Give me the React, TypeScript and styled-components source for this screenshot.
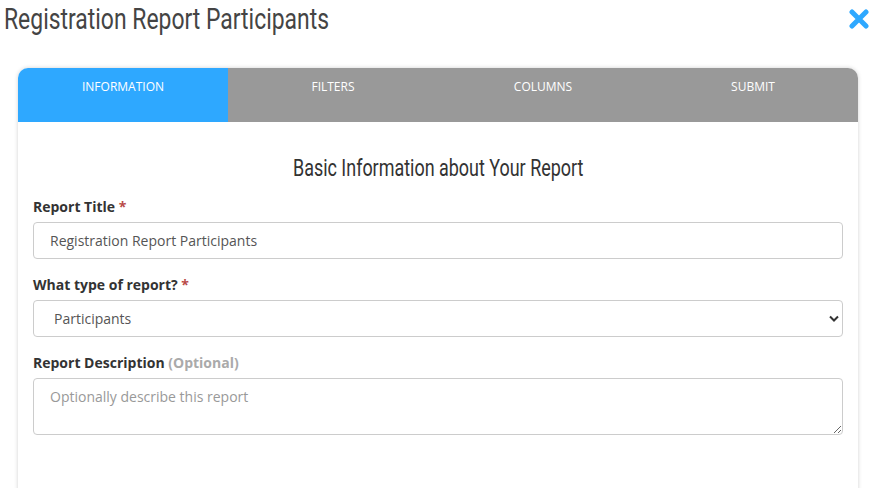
import styled, { createGlobalStyle } from "styled-components";

const GlobalStyle = createGlobalStyle`
  html, body {
    margin: 0;
    padding: 0;
    background: #fff;
    font-family: "Open Sans", "Liberation Sans", sans-serif;
    overflow: hidden;
  }
`;

// no condensed face installed, so squeeze Roboto a bit to look like Oswald
const condensed = `"Roboto", "Liberation Sans", sans-serif`;

const Page = styled.div`
  width: 874px;
  height: 488px;
  overflow: hidden;
`;

const Header = styled.div`
  display: flex;
  align-items: center;
  justify-content: space-between;
  padding: 0 3px 0 4px;
  height: 38px;
`;

const Title = styled.h1`
  margin: 0;
  display: inline-block;
  font-family: ${condensed};
  font-weight: 400;
  font-size: 29px;
  color: #444;
  transform: scaleX(0.79);
  transform-origin: left center;
  white-space: nowrap;
`;

const CloseButton = styled.button`
  border: none;
  background: none;
  padding: 0;
  width: 24px;
  height: 24px;
  cursor: pointer;
  display: flex;
  align-items: center;
  justify-content: center;
`;

const Card = styled.div`
  margin: 30px 16px 0 18px;
  border-radius: 10px 10px 0 0;
  box-shadow: 0 0 4px rgba(0, 0, 0, 0.18);
  background: #fff;
  height: 500px;
  overflow: hidden;
`;

const Tabs = styled.div`
  display: grid;
  grid-template-columns: repeat(4, 1fr);
  height: 54px;
`;

const Tab = styled.div<{ $active?: boolean }>`
  background: ${(p) => (p.$active ? "#2ea8ff" : "#999999")};
  color: #fff;
  font-size: 12px;
  text-transform: uppercase;
  text-align: center;
  padding-top: 10px;
  box-sizing: border-box;
`;

const Body = styled.div`
  padding: 33px 15px 0 15px;
`;

const HeadingRow = styled.div`
  text-align: center;
  margin-bottom: 15px;
`;

const SectionHeading = styled.h2`
  margin: 0;
  display: inline-block;
  font-family: ${condensed};
  font-weight: 400;
  font-size: 23px;
  color: #333;
  transform: scaleX(0.78);
  white-space: nowrap;
`;

const Field = styled.div`
  margin-bottom: 16px;
`;

const Label = styled.label`
  display: block;
  font-size: 14px;
  font-weight: 700;
  color: #333;
  margin-bottom: 6px;
`;

const Required = styled.span`
  color: #b94a48;
`;

const Optional = styled.span`
  color: #aaa;
`;

const inputBase = `
  width: 100%;
  box-sizing: border-box;
  border: 1px solid #ccc;
  border-radius: 4px;
  font-family: "Open Sans", "Liberation Sans", sans-serif;
  font-size: 14px;
  color: #555;
  background: #fff;
  outline: none;
`;

const TextInput = styled.input`
  ${inputBase}
  height: 37px;
  padding: 0 16px;
`;

const SelectWrap = styled.div`
  position: relative;
`;

const Select = styled.select`
  ${inputBase}
  height: 37px;
  padding: 0 20px;
  appearance: none;
`;

const Chevron = styled.svg`
  position: absolute;
  right: 4px;
  top: 15px;
  pointer-events: none;
`;

const TextArea = styled.textarea`
  ${inputBase}
  height: 57px;
  padding: 8px 16px;
  resize: vertical;
  display: block;
  &::placeholder {
    color: #999;
  }
`;

export default function App() {
  return (
    <Page>
      <GlobalStyle />
      <Header>
        <Title>Registration Report Participants</Title>
        <CloseButton aria-label="Close">
          <svg width="20" height="20" viewBox="0 0 20 20">
            <path
              d="M3 3 L17 17 M17 3 L3 17"
              stroke="#2ea8ff"
              strokeWidth="5"
              strokeLinecap="round"
            />
          </svg>
        </CloseButton>
      </Header>
      <Card>
        <Tabs>
          <Tab $active>Information</Tab>
          <Tab>Filters</Tab>
          <Tab>Columns</Tab>
          <Tab>Submit</Tab>
        </Tabs>
        <Body>
          <HeadingRow>
            <SectionHeading>Basic Information about Your Report</SectionHeading>
          </HeadingRow>
          <Field>
            <Label>
              Report Title <Required>*</Required>
            </Label>
            <TextInput defaultValue="Registration Report Participants" />
          </Field>
          <Field>
            <Label>
              What type of report? <Required>*</Required>
            </Label>
            <SelectWrap>
              <Select defaultValue="participants">
                <option value="participants">Participants</option>
              </Select>
              <Chevron width="10" height="8" viewBox="0 0 10 8">
                <path d="M1 1.5 L5 5.5 L9 1.5" stroke="#333" strokeWidth="2" fill="none" />
              </Chevron>
            </SelectWrap>
          </Field>
          <Field>
            <Label>
              Report Description <Optional>(Optional)</Optional>
            </Label>
            <TextArea placeholder="Optionally describe this report" />
          </Field>
        </Body>
      </Card>
    </Page>
  );
}
